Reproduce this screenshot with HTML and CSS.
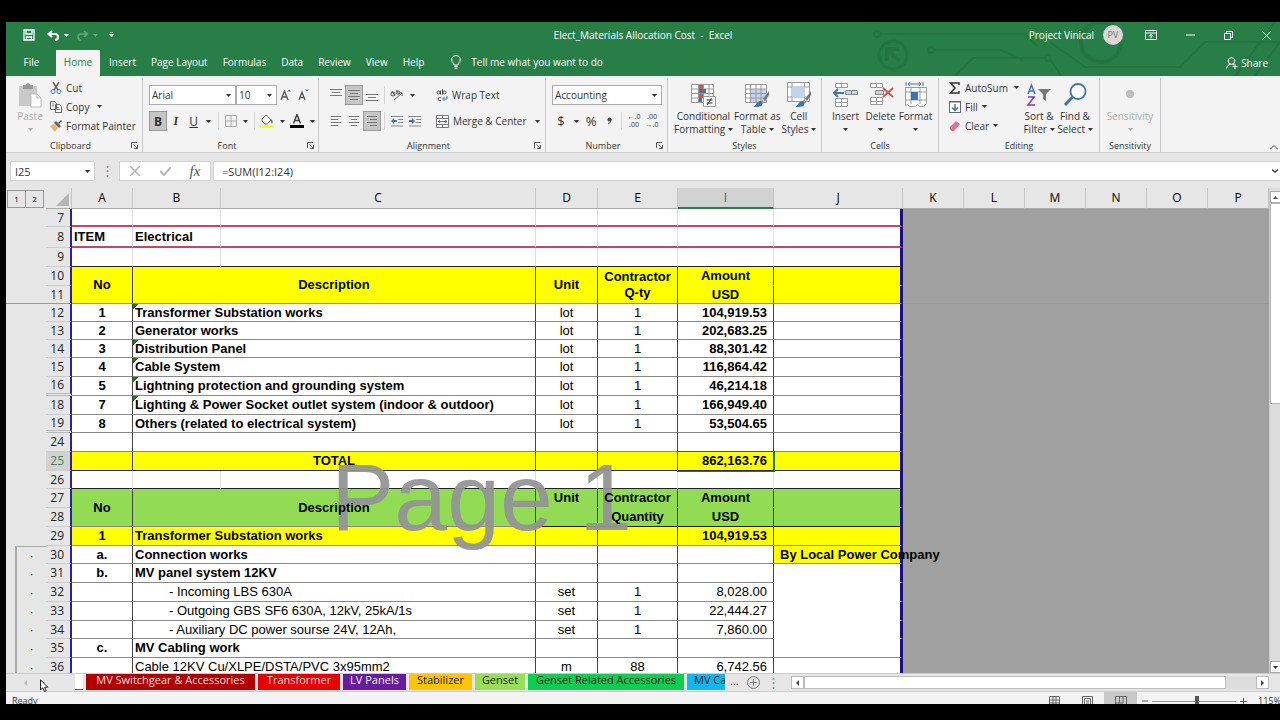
FILE: index.html
```html
<!DOCTYPE html>
<html lang="en">
<head>
<meta charset="utf-8">
<title>Elect_Materials Allocation Cost - Excel</title>
<link rel="stylesheet" href="styles.css">
</head>
<body>
<svg class="defs" aria-hidden="true">
  <symbol id="dn" viewBox="0 0 5 3"><path d="M0 0h5L2.500 3z" fill="currentColor"/></symbol>
  <symbol id="launch" viewBox="0 0 7 7"><path d="M.5 6V.5H6M2.500 2.500l3.500 3.500M6.500 3v3.500H3" fill="none" stroke="#555"/></symbol>
  <symbol id="brush" viewBox="0 0 18 18"><path d="M17 1l-6 8 2 2 4-6z" fill="#777"/><path d="M10 10l2 2-1 2-3-2z" fill="#999"/><path d="M8 11c2 0 3 2 2 4-1 2-6 2-9 2 3-1 3-5 7-6z" fill="#3d74b5"/></symbol>
</svg>
<div class="window">
  <header class="top">
    <svg class="circuit" viewBox="0 0 410 54" width="410" height="54" fill="none" stroke="#206c3b" stroke-width="2" aria-hidden="true">
      <circle cx="23" cy="33" r="14" stroke-width="3"/><path d="M17 39V27h12M18 28l11 11" stroke-width="4"/>
      <circle cx="7" cy="12" r="3"/><path d="M10 12h145l12 12M65 28h66l22 10"/><circle cx="61" cy="28" r="3"/>
      <path d="M85 54l18-18h72"/><circle cx="178" cy="36" r="3"/><path d="M181 38l10 16M180 20l35 25h95l25-25h75M365 54l40-54M385 54l25-34"/>
      <circle cx="231" cy="20" r="20" stroke-width="4"/>
    </svg>
    <div class="titlebar">
      <div class="quick">
        <button aria-label="Save"><svg width="12" height="12" viewBox="0 0 12 12"><path d="M1 1h10v10H1zM3 1v4h6V1M3.500 11V8h5v3" fill="none" stroke="#fff" stroke-width="1.300"/></svg></button>
        <button class="undo" aria-label="Undo"><svg width="13" height="11" viewBox="0 0 13 11"><path d="M5 1L1.500 4 5 7M2 4h6c4 0 4 6 0 6" fill="none" stroke="#fff" stroke-width="2"/></svg><svg width="5" height="3"><use href="#dn"/></svg></button>
        <button class="redo" aria-label="Redo"><svg width="13" height="11" viewBox="0 0 13 11"><path d="M8 1l3.500 3L8 7M11 4H5C1 4 1 10 5 10" fill="none" stroke="#fff" stroke-width="1.600"/></svg><svg width="5" height="3"><use href="#dn"/></svg></button>
        <button class="custom" aria-label="Customize toolbar"><svg width="5" height="6" viewBox="0 0 5 6"><path d="M1 .5h3M.5 2.500h4L2.500 5z" fill="#fff" stroke="#fff" stroke-width=".5"/></svg></button>
      </div>
      <h1>Elect_Materials Allocation Cost &nbsp;-&nbsp; Excel</h1>
      <div class="account">
        <span>Project Vinical</span><span class="avatar">PV</span>
        <button aria-label="Ribbon display"><svg width="12" height="10" viewBox="0 0 12 10"><path d="M.5 .5h11v9H.5zM.5 3h11M6 8.500V4.500M4 6.500l2-2 2 2" fill="none" stroke="#fff"/></svg></button>
        <button aria-label="Minimize"><svg width="9" height="2"><path d="M0 1h9" stroke="#fff"/></svg></button>
        <button aria-label="Restore"><svg width="9" height="9" viewBox="0 0 9 9"><path d="M.5 2.500h6v6h-6zM2.500 2.500v-2h6v6h-2" fill="none" stroke="#fff"/></svg></button>
        <button aria-label="Close"><svg width="9" height="9" viewBox="0 0 9 9"><path d="M.5 .5l8 8M8.500 .5l-8 8" stroke="#fff"/></svg></button>
      </div>
    </div>
    <nav class="tabs">
      <button class="file">File</button><button class="active">Home</button><button>Insert</button><button>Page Layout</button><button>Formulas</button><button>Data</button><button>Review</button><button>View</button><button>Help</button>
      <button class="tell"><svg width="10" height="14" viewBox="0 0 10 14"><path d="M3 10C3 8 .7 7.500 .7 4.800a4.300 4.300 0 018.600 0C9.300 7.500 7 8 7 10zM3 11.500h4M3.500 13.200h3" fill="none" stroke="#fff"/></svg>Tell me what you want to do</button>
      <button class="share"><svg width="12" height="12" viewBox="0 0 12 12"><circle cx="5.500" cy="4" r="3.300" fill="none" stroke="#fff"/><path d="M.5 11.500C1 9 2.500 7.500 4.500 7.300M6.500 7.300L8 8M6.500 9.500h5M9 7v5" fill="none" stroke="#fff"/></svg>Share</button>
    </nav>
  </header>

  <section class="ribbon" aria-label="Home ribbon">
    <div class="group clipboard">
      <div class="body">
        <button class="big off"><svg width="26" height="26" viewBox="0 0 26 26"><path d="M2 4h18v20H2z" fill="#c9c9c9"/><path d="M6 3h3a2 2 0 014 0h3v4H6z" fill="#999"/><path d="M14 12h6l4 4v9H14z" fill="#fff" stroke="#bbb"/><path d="M20 12v4h4" fill="none" stroke="#bbb"/></svg><span>Paste</span><svg width="5" height="3"><use href="#dn"/></svg></button>
        <div class="stack">
          <button><svg width="12" height="12" viewBox="0 0 12 12"><path d="M3 0l5 8M9 0L4 8" stroke="#666" stroke-width="1.500"/><circle cx="3" cy="9.500" r="2" fill="none" stroke="#3d74b5"/><circle cx="9" cy="9.500" r="2" fill="none" stroke="#3d74b5"/></svg>Cut</button>
          <button><svg width="12" height="12" viewBox="0 0 12 12"><path d="M.5 .5h4l2 2v6h-6zM5.500 3.500h4l2 2v6h-6z" fill="#fff" stroke="#666"/><path d="M2 3h2M2 5h2M7 6.500h2M7 8.500h3" stroke="#777"/></svg>Copy<svg class="far" width="5" height="3"><use href="#dn"/></svg></button>
          <button><svg width="12" height="12" viewBox="0 0 12 12"><path d="M0 6l4-2 4 4-3 4z" fill="#e2b66c"/><path d="M4 3l2-2 5 5-2 2z" fill="#666"/><path d="M8 3l3-3 1 1-3 3z" fill="#444"/></svg>Format Painter</button>
        </div>
      </div>
      <footer><span>Clipboard</span><svg width="7" height="7"><use href="#launch"/></svg></footer>
    </div>

    <div class="group font">
      <div class="body rows">
        <div class="line">
          <label class="combo name"><select aria-label="Font"><option>Arial</option></select><svg width="5" height="3"><use href="#dn"/></svg></label><label class="combo size"><select aria-label="Font size"><option>10</option></select><svg width="5" height="3"><use href="#dn"/></svg></label>
          <button class="t" aria-label="Increase font"><svg width="12" height="12" viewBox="0 0 12 12"><path d="M1 11l3.500-9L8 11M2.500 8h4" fill="none" stroke="#555" stroke-width="1.300"/><path d="M7 2.500L9 .5l2 2z" fill="#3d74b5"/></svg></button>
          <button class="t" aria-label="Decrease font"><svg width="12" height="12" viewBox="0 0 12 12"><path d="M1 11l3-8 3 8M2.500 8.500h3" fill="none" stroke="#555" stroke-width="1.300"/><path d="M7 .5h4l-2 2z" fill="#3d74b5"/></svg></button>
        </div>
        <div class="line">
          <button class="t on"><b>B</b></button><button class="t"><i>I</i></button><button class="t"><u>U</u></button><button class="dd" aria-label="Underline options"><svg width="5" height="3"><use href="#dn"/></svg></button><span class="sep"></span>
          <button class="t" aria-label="Borders"><svg width="12" height="12" viewBox="0 0 12 12"><path d="M.5 .5h11v11H.5zM6 0v12M0 6h12" fill="none" stroke="#aaa"/></svg></button><button class="dd" aria-label="Border options"><svg width="5" height="3"><use href="#dn"/></svg></button><span class="sep"></span>
          <button class="t" aria-label="Fill color"><svg width="14" height="14" viewBox="0 0 14 14"><path d="M2 5l4-4 5 5-4 4H5L2 7z" fill="#fff" stroke="#666"/><path d="M11 5c2 1 2 4 1 5-1-1-1-3-1-5z" fill="#3d74b5"/><path d="M0 11h13v3H0z" fill="#ff0"/></svg></button><button class="dd" aria-label="Fill options"><svg width="5" height="3"><use href="#dn"/></svg></button>
          <button class="t" aria-label="Font color"><svg width="14" height="14" viewBox="0 0 14 14"><path d="M3.500 9.500l3.500-9 3.500 9M5 6.500h4" fill="none" stroke="#444" stroke-width="1.500"/><path d="M0 11h14v3H0z"/></svg></button><button class="dd" aria-label="Font color options"><svg width="5" height="3"><use href="#dn"/></svg></button>
        </div>
      </div>
      <footer><span>Font</span><svg width="7" height="7"><use href="#launch"/></svg></footer>
    </div>

    <div class="group align">
      <div class="body">
        <div class="rows left">
          <div class="line">
            <button class="t" aria-label="Top align"><svg width="12" height="12"><path d="M0 .5h12M2 3.500h8M0 6.500h12" stroke="#777"/></svg></button><button class="t on" aria-label="Middle align"><svg width="12" height="12"><path d="M0 1.500h12M2 4.500h8M0 7.500h12M2 10.500h8" stroke="#777"/></svg></button><button class="t" aria-label="Bottom align"><svg width="12" height="12"><path d="M0 5.500h12M2 8.500h8M0 11.500h12" stroke="#777"/></svg></button><span class="sep"></span>
            <button class="t" aria-label="Orientation"><svg width="14" height="12" viewBox="0 0 14 12"><path d="M4 11L12 4M9 4h3v3" fill="none" stroke="#555"/><circle cx="3" cy="5" r="2" fill="none" stroke="#555"/><path d="M5 7L2 2M6 1l3 4" stroke="#555"/><circle cx="8" cy="3.500" r="1.700" fill="none" stroke="#555"/></svg></button><button class="dd" aria-label="Orientation options"><svg width="5" height="3"><use href="#dn"/></svg></button>
          </div>
          <div class="line">
            <button class="t" aria-label="Align left"><svg width="10" height="10"><path d="M0 .5h10M0 3.500h7M0 6.500h10M0 9.500h7" stroke="#777"/></svg></button><button class="t" aria-label="Center"><svg width="10" height="10"><path d="M0 .5h10M2 3.500h6M0 6.500h10M2 9.500h6" stroke="#777"/></svg></button><button class="t on" aria-label="Align right"><svg width="10" height="10"><path d="M0 .5h10M3 3.500h7M0 6.500h10M3 9.500h7" stroke="#777"/></svg></button><span class="sep"></span>
            <button class="t" aria-label="Decrease indent"><svg width="12" height="11"><path d="M0 .5h12M7 3.500h5M7 6.500h5M0 10h12" stroke="#888"/><path d="M0 5l3-3v2h3v2H3v2z" fill="#3d74b5"/></svg></button><button class="t" aria-label="Increase indent"><svg width="12" height="11"><path d="M0 .5h12M7 3.500h5M7 6.500h5M0 10h12" stroke="#888"/><path d="M6 5L3 2v2H0v2h3v2z" fill="#3d74b5"/></svg></button>
          </div>
        </div>
        <div class="rows right">
          <button class="line wrap"><svg width="12" height="12" viewBox="0 0 12 12"><circle cx="2.500" cy="3.500" r="1.500" fill="none" stroke="#444"/><path d="M4.500 1.500v4M6.500 0v5.500M5 8.500H3.500a1.500 1.500 0 000 3H5" fill="none" stroke="#444"/><circle cx="8.500" cy="3.500" r="1.500" fill="none" stroke="#444"/><path d="M11 7v3H7M8.500 8l-2 2 2 2" fill="none" stroke="#3d74b5"/></svg>Wrap Text</button>
          <button class="line"><svg width="13" height="13" viewBox="0 0 13 13"><path d="M.5 .5h12v12H.5zM.5 3.500h12M.5 9.500h12M6.500 0v3M6.500 10v3" fill="#fff" stroke="#777"/><path d="M2 6.500h9M4 5L2 6.500 4 8M9 5l2 1.500L9 8" fill="none" stroke="#3d74b5"/></svg>Merge &amp; Center<svg class="far" width="5" height="3"><use href="#dn"/></svg></button>
        </div>
      </div>
      <footer><span>Alignment</span><svg width="7" height="7"><use href="#launch"/></svg></footer>
    </div>

    <div class="group number">
      <div class="body rows">
        <div class="line"><label class="combo fmt"><select aria-label="Number format"><option>Accounting</option></select><svg width="5" height="3"><use href="#dn"/></svg></label></div>
        <div class="line">
          <button class="t sym">$</button><button class="dd" aria-label="Currency options"><svg width="5" height="3"><use href="#dn"/></svg></button><button class="t sym">%</button><button class="t sym" aria-label="Comma style"><svg width="5" height="8"><circle cx="2.500" cy="2.500" r="2" fill="#444"/><path d="M4 2c0 3-1 4-3 5" fill="none" stroke="#444"/></svg></button><span class="sep"></span>
          <button class="t dec"><span>←.0</span><span>.00</span></button><button class="t dec"><span>.00</span><span>→.0</span></button>
        </div>
      </div>
      <footer><span>Number</span><svg width="7" height="7"><use href="#launch"/></svg></footer>
    </div>

    <div class="group styles">
      <div class="body">
        <button class="big"><svg width="26" height="26" viewBox="0 0 26 26"><path d="M1.500 2.500h22v18h-22zM1.500 7h22M1.500 11.500h22M1.500 16h22M8.500 2v18M13.500 2v18M19 2v18" fill="#fff" stroke="#999"/><path d="M9 3h4v4H9zM9 12h4v4H9z" fill="#d5533f"/><path d="M9 7h7v4H9zM9 16h3v4H9z" fill="#3d74b5"/><path d="M13.500 14.500h12v10h-12z" fill="#fff" stroke="#999"/><path d="M16.500 18h6M16.500 21h6M21.500 16l-4 7" stroke="#333"/></svg><span>Conditional<br>Formatting <svg width="5" height="3"><use href="#dn"/></svg></span></button>
        <button class="big"><svg width="26" height="26" viewBox="0 0 26 26"><path d="M1.500 2.500h21v18h-21z" fill="#fff"/><path d="M7 7h15v13H7z" fill="#c3d3ea"/><path d="M1.500 2.500h21v18h-21zM1.500 7h21M1.500 11.500h21M1.500 16h21M6.500 2v18M12 2v18M17 2v18" fill="none" stroke="#999"/><use href="#brush" x="8" y="8" width="18" height="18"/></svg><span>Format as<br>Table <svg width="5" height="3"><use href="#dn"/></svg></span></button>
        <button class="big"><svg width="26" height="26" viewBox="0 0 26 26"><path d="M1.500 .5h22v19h-22zM1.500 5h22M1.500 15h22M6 0v19M18.500 0v19" fill="#fff" stroke="#999"/><path d="M6 5h13v10H6z" fill="#c3d3ea"/><use href="#brush" x="8" y="8" width="18" height="18"/></svg><span>Cell<br>Styles <svg width="5" height="3"><use href="#dn"/></svg></span></button>
      </div>
      <footer><span>Styles</span></footer>
    </div>

    <div class="group cells">
      <div class="body">
        <button class="big"><svg width="26" height="26" viewBox="0 0 26 26"><path d="M2.500 1.500h12v4h-12zM8.500 1v5M2.500 16.500h12v8h-12zM8.500 16v8M2.500 20.500h12" fill="#fff" stroke="#999"/><path d="M12.500 8.500h12v4h-12zM18.500 8v5" fill="#c3d3ea" stroke="#888"/><path d="M11 11H1M5 7l-4 4 4 4" fill="none" stroke="#3d74b5" stroke-width="2"/></svg><span>Insert</span><svg width="5" height="3"><use href="#dn"/></svg></button>
        <button class="big"><svg width="26" height="26" viewBox="0 0 26 26"><path d="M2.500 1.500h12v4h-12zM8.500 1v5M2.500 15.500h12v7h-12zM8.500 16v7M2.500 19.500h12" fill="#fff" stroke="#999"/><path d="M7.500 8.500h8v4h-8z" fill="#c3d3ea" stroke="#888"/><path d="M15 6l10 9M25 6L15 15" stroke="#d5533f" stroke-width="2"/></svg><span>Delete</span><svg width="5" height="3"><use href="#dn"/></svg></button>
        <button class="big"><svg width="26" height="26" viewBox="0 0 26 26"><path d="M3 0v4M20 0v4M5 2h13M7 0L5 2l2 2M16 0l2 2-2 2" fill="none" stroke="#3d74b5"/><path d="M2.500 5.500h21v16l-3 3h-4l-2-2-2 2h-6l-2-2-2 1zM2.500 10h21M2.500 18h21M8 6v16M17 6v16" fill="#fff" stroke="#999"/><path d="M8 10h7v8H8z" fill="#3d74b5"/></svg><span>Format</span><svg width="5" height="3"><use href="#dn"/></svg></button>
      </div>
      <footer><span>Cells</span></footer>
    </div>

    <div class="group editing">
      <div class="body">
        <div class="stack">
          <button><svg width="12" height="12" viewBox="0 0 12 12"><path d="M10 3V1H1.500L6 6l-4.500 5H10V9" fill="none" stroke="#333" stroke-width="1.500"/></svg>AutoSum<svg class="far" width="5" height="3"><use href="#dn"/></svg></button>
          <button><svg width="12" height="12" viewBox="0 0 12 12"><path d="M.5 .5h11v11H.5z" fill="#fff" stroke="#666"/><path d="M0 .5h12" stroke="#666" stroke-width="2"/><path d="M6 3v6M3 6.500l3 3 3-3" fill="none" stroke="#3d74b5" stroke-width="1.500"/></svg>Fill <svg width="5" height="3"><use href="#dn"/></svg></button>
          <button><svg width="12" height="12" viewBox="0 0 12 12"><path d="M1 7l6-6 4 3-6 7H3L1 9z" fill="#e0719c"/><path d="M1 7l4 4-2 0-2-2z" fill="#b77"/></svg>Clear <svg width="5" height="3"><use href="#dn"/></svg></button>
        </div>
        <button class="big"><svg width="26" height="26" viewBox="0 0 26 26"><path d="M2 12L5.500 3 9 12M3.500 9h4" fill="none" stroke="#3d74b5" stroke-width="1.500"/><path d="M2 15h6l-6 8h7" fill="none" stroke="#7a3fb0" stroke-width="1.500"/><path d="M12 7h13l-5 5v7l-3-2v-5z" fill="#777"/></svg><span>Sort &amp;<br>Filter <svg width="5" height="3"><use href="#dn"/></svg></span></button>
        <button class="big"><svg width="26" height="26" viewBox="0 0 26 26"><circle cx="16" cy="9.500" r="7.500" fill="#fff" stroke="#3d74b5" stroke-width="1.800"/><path d="M10.500 15L3 23" stroke="#3d74b5" stroke-width="3"/></svg><span>Find &amp;<br>Select <svg width="5" height="3"><use href="#dn"/></svg></span></button>
      </div>
      <footer><span>Editing</span></footer>
    </div>

    <div class="group sens">
      <div class="body"><button class="big off"><svg width="26" height="26"><circle cx="13" cy="12" r="4" fill="#bdbdbd"/></svg><span>Sensitivity</span><svg width="5" height="3"><use href="#dn"/></svg></button></div>
      <footer><span>Sensitivity</span></footer>
    </div>
    <button class="collapse" aria-label="Collapse ribbon"><svg width="8" height="5"><path d="M0 4.500l4-4 4 4" fill="none" stroke="#444"/></svg></button>
  </section>

  <div class="formula">
    <label class="combo cell"><input type="text" value="I25" aria-label="Name box"><svg width="5" height="3"><use href="#dn"/></svg></label>
    <span class="dots">⋮</span>
    <div class="fx">
      <button aria-label="Cancel"><svg width="10" height="10"><path d="M0 0l10 10M10 0L0 10" stroke="#b5b5b5" stroke-width="1.500"/></svg></button>
      <button aria-label="Enter"><svg width="11" height="9"><path d="M0 4l4 4 7-8" fill="none" stroke="#b5b5b5" stroke-width="2"/></svg></button>
      <button class="fn"><i>fx</i></button>
    </div>
    <label class="bar"><input type="text" value="=SUM(I12:I24)" aria-label="Formula"><svg width="6" height="4" viewBox="0 0 6 4"><path d="M0 .5l3 2.500 3-2.500" fill="none" stroke="#444" stroke-width="1.500"/></svg></label>
  </div>

  <main class="sheet">
    <div class="grid">
      <table>
        <colgroup><col class="w-o1"><col class="w-o2"><col class="w-rh"><col class="w-a"><col class="w-b"><col class="w-c"><col class="w-d"><col class="w-e"><col class="w-i"><col class="w-j"><col><col><col><col><col><col></colgroup>
        <thead><tr><td colspan="2" class="levels"><div><button>1</button><button>2</button></div></td><th class="corner"><svg width="13" height="13"><path d="M13 0v13H0z" fill="#b5b5b5"/></svg></th><th>A</th><th>B</th><th>C</th><th>D</th><th>E</th><th class="sel">I</th><th>J</th><th>K</th><th>L</th><th>M</th><th>N</th><th>O</th><th>P</th></tr></thead>
        <tbody>
          <tr class="short plain redline"><td colspan="2"></td><th>7</th><td></td><td></td><td></td><td></td><td></td><td></td><td></td><td colspan="6"></td></tr>
          <tr class="tall plain redline"><td colspan="2"></td><th>8</th><td class="l b">ITEM</td><td class="l b">Electrical</td><td></td><td></td><td></td><td></td><td></td><td colspan="6"></td></tr>
          <tr class="plain end"><td colspan="2"></td><th>9</th><td></td><td></td><td></td><td></td><td></td><td></td><td></td><td colspan="6"></td></tr>
          <tr class="yellow b open"><td colspan="2"></td><th>10</th><td rowspan="2" class="close">No</td><td colspan="2" rowspan="2" class="close">Description</td><td rowspan="2" class="close">Unit</td><td rowspan="2" class="close">Contractor<br>Q-ty</td><td>Amount</td><td></td><td colspan="6"></td></tr>
          <tr class="short yellow b freeze"><td colspan="2"></td><th>11</th><td class="inner">USD</td><td></td><td colspan="6"></td></tr>
          <tr class="short"><td colspan="2"></td><th>12</th><td class="b">1</td><td colspan="2" class="l b err">Transformer Substation works</td><td>lot</td><td>1</td><td class="r b">104,919.53</td><td></td><td colspan="6"></td></tr>
          <tr class="short"><td colspan="2"></td><th>13</th><td class="b">2</td><td colspan="2" class="l b">Generator works</td><td>lot</td><td>1</td><td class="r b">202,683.25</td><td></td><td colspan="6"></td></tr>
          <tr class="short"><td colspan="2"></td><th>14</th><td class="b">3</td><td colspan="2" class="l b err">Distribution Panel</td><td>lot</td><td>1</td><td class="r b">88,301.42</td><td></td><td colspan="6"></td></tr>
          <tr><td colspan="2"></td><th>15</th><td class="b">4</td><td colspan="2" class="l b err">Cable System</td><td>lot</td><td>1</td><td class="r b">116,864.42</td><td></td><td colspan="6"></td></tr>
          <tr><td colspan="2"></td><th class="skip">16</th><td class="b">5</td><td colspan="2" class="l b err">Lightning protection and grounding system</td><td>lot</td><td>1</td><td class="r b">46,214.18</td><td></td><td colspan="6"></td></tr>
          <tr><td colspan="2"></td><th>18</th><td class="b">7</td><td colspan="2" class="l b err">Lighting &amp; Power Socket outlet system (indoor &amp; outdoor)</td><td>lot</td><td>1</td><td class="r b">166,949.40</td><td></td><td colspan="6"></td></tr>
          <tr class="short"><td colspan="2"></td><th class="skip">19</th><td class="b">8</td><td colspan="2" class="l b">Others (related to electrical system)</td><td>lot</td><td>1</td><td class="r b">53,504.65</td><td></td><td colspan="6"></td></tr>
          <tr><td colspan="2"></td><th>24</th><td></td><td colspan="2"></td><td></td><td></td><td></td><td></td><td colspan="6"></td></tr>
          <tr class="yellow b end"><td colspan="2"></td><th class="cur">25</th><td></td><td colspan="2"><span>TOTAL</span></td><td></td><td></td><td class="r picked">862,163.76</td><td></td><td colspan="6"></td></tr>
          <tr class="short plain end"><td colspan="2"></td><th>26</th><td></td><td></td><td></td><td></td><td></td><td></td><td></td><td colspan="6"></td></tr>
          <tr class="green b open"><td colspan="2"></td><th>27</th><td rowspan="2" class="close">No</td><td colspan="2" rowspan="2" class="close"><span>Description</span></td><td><span>Unit</span></td><td><span>Contractor</span></td><td>Amount</td><td></td><td colspan="6"></td></tr>
          <tr class="green b end"><td colspan="2"></td><th>28</th><td class="inner"></td><td><span>Quantity</span></td><td>USD</td><td></td><td colspan="6"></td></tr>
          <tr class="yellow b"><td colspan="2"></td><th>29</th><td>1</td><td colspan="2" class="l"><span>Transformer Substation works</span></td><td></td><td></td><td class="r">104,919.53</td><td></td><td colspan="6"></td></tr>
          <tr class="short sub first"><td></td><td>·</td><th>30</th><td class="b">a.</td><td colspan="2" class="l b">Connection works</td><td></td><td></td><td></td><td class="l b note"><span>By Local Power Company</span></td><td colspan="6"></td></tr>
          <tr class="sub"><td></td><td>·</td><th>31</th><td class="b">b.</td><td colspan="2" class="l b">MV panel system 12KV</td><td></td><td></td><td></td><td class="void"></td><td colspan="6"></td></tr>
          <tr class="sub"><td></td><td>·</td><th>32</th><td></td><td colspan="2" class="l in">- Incoming LBS 630A</td><td>set</td><td>1</td><td class="r">8,028.00</td><td class="void"></td><td colspan="6"></td></tr>
          <tr class="sub"><td></td><td>·</td><th>33</th><td></td><td colspan="2" class="l in">- Outgoing GBS SF6 630A, 12kV, 25kA/1s</td><td>set</td><td>1</td><td class="r">22,444.27</td><td class="void"></td><td colspan="6"></td></tr>
          <tr class="short sub"><td></td><td>·</td><th>34</th><td></td><td colspan="2" class="l in">- Auxiliary DC power sourse 24V, 12Ah,</td><td>set</td><td>1</td><td class="r">7,860.00</td><td class="void"></td><td colspan="6"></td></tr>
          <tr class="sub"><td></td><td>·</td><th>35</th><td class="b">c.</td><td colspan="2" class="l b">MV Cabling work</td><td></td><td></td><td></td><td></td><td colspan="6"></td></tr>
          <tr class="sub"><td></td><td>·</td><th>36</th><td></td><td colspan="2" class="l">Cable 12KV Cu/XLPE/DSTA/PVC 3x95mm2</td><td>m</td><td>88</td><td class="r">6,742.56</td><td></td><td colspan="6"></td></tr>
        </tbody>
      </table>
      <div class="watermark">Page 1</div>
    </div>
    <div class="vscroll"><button aria-label="Scroll up"><svg width="5" height="3" viewBox="0 0 5 3"><path d="M0 3h5L2.500 0z" fill="#555"/></svg></button><div class="thumb"></div><div class="track"></div><button aria-label="Scroll down"><svg width="5" height="3"><use href="#dn"/></svg></button></div>
  </main>

  <div class="sheets">
    <div class="nav"><button aria-label="Previous sheet"><svg width="3" height="6"><path d="M3 0v6L0 3z" fill="#bbb"/></svg></button><button aria-label="Next sheet"><svg width="4" height="6"><path d="M0 0v6l4-3z" fill="#555"/></svg></button>
      <svg class="pointer" width="9" height="13" viewBox="0 0 9 13"><path d="M.5 .8v10l2.300-2 1.700 3.700 1.700-.8-1.600-3.500h3.200z" fill="#fff" stroke="#222"/></svg></div>
    <button class="tab now" aria-label="Summary"></button><button class="tab t1">MV Switchgear &amp; Accessories</button><button class="tab t2">Transformer</button><button class="tab t3">LV Panels</button><button class="tab t4">Stabilizer</button><button class="tab t5">Genset</button><button class="tab t6">Genset Related Accessories</button><button class="tab t7">MV Ca</button>
    <span class="more">...</span><button class="add" aria-label="New sheet"><svg width="13" height="13" viewBox="0 0 13 13"><circle cx="6.500" cy="6.500" r="6" fill="none" stroke="#777"/><path d="M6.500 3v7M3 6.500h7" stroke="#777"/></svg></button><span class="dots">⋮</span>
    <div class="hscroll"><button aria-label="Scroll left"><svg width="3" height="6"><path d="M3 0v6L0 3z" fill="#444"/></svg></button><div class="thumb"></div><div class="track"></div><button aria-label="Scroll right"><svg width="3" height="6"><path d="M0 0v6l3-3z" fill="#444"/></svg></button></div>
  </div>

  <footer class="status">
    <span class="ready">Ready</span>
    <button aria-label="Normal view"><svg width="11" height="11"><path d="M.5 .5h10v10H.5zM4 0v11M7 0v11M0 4h11M0 7h11" fill="none" stroke="#666"/></svg></button>
    <button aria-label="Page layout view"><svg width="11" height="11"><path d="M.5 .5h10v10H.5zM2.500 2.500h6v8M2.500 2.500v8M4 5h3M4 7h3" fill="none" stroke="#666"/></svg></button>
    <button class="on" aria-label="Page break view"><svg width="12" height="11"><path d="M.5 .5h11v10H.5zM4.500 0v7M8 0v7M0 7h8" fill="none" stroke="#666"/></svg></button>
    <div class="zoom"><svg width="6" height="2"><path d="M0 1h6" stroke="#555"/></svg><input type="range" min="10" max="220" value="122" aria-label="Zoom"><svg width="7" height="7"><path d="M0 3.500h7M3.500 0v7" stroke="#555"/></svg></div>
    <span class="pct">115%</span>
  </footer>
</div>
</body>
</html>
```
FILE: styles.css
```css
* { box-sizing: border-box; }
body { margin: 0; background: #000; font-family: "Open Sans", "Noto Sans", sans-serif; font-size: 10px; color: #333; }
button, input, select { font: inherit; color: inherit; border: 0; background: none; padding: 0; margin: 0; }
button { display: flex; align-items: center; justify-content: center; white-space: nowrap; }
svg { flex: none; }
.defs { display: none; }
.window { display: flex; flex-direction: column; height: 100vh; padding: 22px 0 16px 6px; }

/* title bar and tabs */
.top { position: relative; background: #277e47; color: #fff; flex: none; overflow: hidden; }
.circuit { position: absolute; right: 0; top: 0; opacity: .5; }
.titlebar { position: relative; display: grid; grid-template-columns: 1fr auto 1fr; align-items: center; height: 26px; }
.titlebar h1 { margin: 0; font-size: 10px; font-weight: 400; }
.quick { display: flex; align-items: center; padding-left: 17px; }
.quick .undo, .quick .redo { gap: 4px; }
.quick .undo { margin-left: 12px; }
.quick .redo { margin-left: 7px; opacity: .3; }
.quick .custom { margin-left: 11px; }
.account { display: flex; align-items: center; justify-content: flex-end; padding-right: 9px; }
.avatar { width: 20px; height: 20px; line-height: 20px; margin: 0 22px 0 9px; border-radius: 50%; background: #dcd8d8; color: #776; text-align: center; font-size: 9px; }
.account button + button { margin-left: 29px; }
.tabs { position: relative; display: flex; height: 28px; padding: 2px 12px 0 0; }
.tabs button { padding: 0 7px 2px 8px; }
.tabs .file { width: 50px; }
.tabs .active { background: #f4f3f3; color: #277e47; width: 44px; padding: 0 0 2px; margin-right: 1px; }
.tabs .tell { gap: 10px; margin-left: 12px; }
.tabs .share { margin-left: auto; gap: 3px; padding: 0; }

/* ribbon */
.ribbon { display: flex; flex: none; background: #f4f3f3; border-bottom: 1px solid #d0d0d0; padding: 2px 0 0; }
.group { display: flex; flex-direction: column; border-right: 1px solid #c8c8c8; flex: none; }
.body { display: flex; height: 60px; }
.group footer { display: flex; height: 14px; align-items: center; padding: 0 4px; font-size: 9px; }
.group footer span { flex: 1; text-align: center; }
.big { flex-direction: column; justify-content: flex-start; padding-top: 4px; line-height: 13px; }
.big > svg + span { margin-top: 2px; }
.big > svg:last-child { margin-top: 5px; }
.big span svg { vertical-align: 2px; }
.off { color: #aaa; }
.stack { display: grid; grid-template-rows: repeat(3, 19px); }
.stack button { justify-content: flex-start; gap: 4px; }
.rows { display: flex; flex-direction: column; gap: 6px; padding-top: 7px; }
.line { display: flex; height: 20px; align-items: center; }
.line .t { width: 18px; height: 20px; }
.t.on { background: #c6c6c6; border: 1px solid #999; }
.dd { width: 12px; height: 20px; }
.sep { width: 1px; height: 18px; margin: 0 3px; background: #d5d5d5; }
.combo { display: grid; align-items: center; background: #fff; border: 1px solid #ababab; height: 20px; }
.combo > * { grid-area: 1 / 1; }
.combo select, .combo input { appearance: none; width: 100%; height: 18px; padding: 0 2px; background: none; outline: 0; }
.combo svg { justify-self: end; margin-right: 4px; pointer-events: none; }
.clipboard { width: 137px; }
.clipboard .big { width: 44px; padding-left: 4px; }
.clipboard .far { margin-left: 4px; }
.font { width: 176px; }
.font .rows { padding-left: 6px; }
.font .name { width: 87px; }
.font .size { width: 41px; }
.font b, .font i, .font u { font-size: 12px; }
.font i { font-family: "Liberation Serif", serif; font-weight: 700; }
.align { width: 227px; }
.align .left { width: 111px; padding-left: 8px; }
.align .right { padding-left: 6px; }
.align .right .line { gap: 4px; }
.align .right .wrap { justify-content: flex-start; }
.align .far { margin-left: 4px; }
.number { width: 122px; }
.number .rows { padding-left: 6px; }
.number .fmt { width: 110px; }
.sym { font-size: 13px; }
.line .dec { flex-direction: column; font-size: 7px; line-height: 8px; }
.styles { width: 154px; }
.styles .body { padding-left: 6px; gap: 1px; }
.cells { width: 117px; }
.cells .body { padding-left: 6px; }
.cells .big { width: 35px; }
.editing { width: 161px; }
.editing .body { padding-left: 10px; }
.editing .stack { width: 72px; }
.editing .far { margin-left: 2px; }
.editing .big { width: 36px; }
.sens { width: 61px; }
.sens .big { flex: 1; }
.collapse { margin: auto 2px 2px auto; }

/* formula bar */
.formula { display: flex; flex: none; background: #e6e6e6; padding: 8px 0 7px 4px; }
.formula .combo { width: 85px; border-color: #d0d0d0; }
.formula input { font-size: 11px; }
.formula .combo input { padding-left: 4px; }
.dots { color: #888; font-size: 13px; line-height: 18px; width: 24px; text-align: center; }
.fx { display: flex; background: #fff; border: 1px solid #d0d0d0; width: 92px; margin-right: 2px; }
.fx button { flex: 1; }
.fn i { font-family: "Liberation Serif", serif; font-size: 15px; line-height: 16px; color: #555; }
.bar { display: flex; flex: 1; align-items: center; background: #fff; border: 1px solid #d0d0d0; border-right: 0; padding: 0 2px 0 8px; }
.bar input { flex: 1; min-width: 0; outline: 0; }

/* sheet */
.sheet { display: flex; flex: 1; min-height: 0; background: #e6e6e6; }
.grid { position: relative; flex: 1; overflow: hidden; border-right: 1px solid #ccc; }
table { width: 100%; table-layout: fixed; border-collapse: separate; border-spacing: 0; font: 13px/16px "Liberation Sans", Arial, sans-serif; color: #000; }
.w-o1 { width: 9px; }
.w-o2 { width: 31px; }
.w-rh { width: 26px; }
.w-a { width: 61px; }
.w-b { width: 88px; }
.w-c { width: 315px; }
.w-d { width: 62px; }
.w-e { width: 80px; }
.w-i { width: 96px; }
.w-j { width: 129px; }
th, td { padding: 0; white-space: nowrap; text-align: center; }
th { font: 12px/16px "Open Sans", sans-serif; }
thead th { height: 21px; border-right: 1px solid #c4c4c4; border-bottom: 1px solid #aaa; }
thead .corner { vertical-align: bottom; text-align: right; line-height: 0; padding: 0 2px 2px 0; }
thead .sel { background: #d2d2d2; color: #217346; border-bottom: 2px solid #277e47; }
.levels > div { display: flex; padding-left: 1px; }
.levels button { width: 19px; height: 18px; border: 1px solid #999; font-size: 8px; font-family: "Open Sans", sans-serif; }
.levels button + button { margin-left: -1px; }
tbody tr { height: 19px; }
tbody .short { height: 18px; }
tbody .tall { height: 21px; }
tbody th { background: #e6e6e6; border-bottom: 1px solid #ccc; border-right: 2px solid #2c1fa0; color: #222; text-align: right; padding-right: 6px; }
tbody th.skip { border-bottom: 3px double #bbb; line-height: 14px; }
tbody th.cur { background: #d2d2d2; color: #4b7a5c; }
tbody td { background: #fff; border-right: 1px solid #444; border-bottom: 1px solid #888; }
tbody td:first-child, .sub td:nth-child(2) { background: #e6e6e6; border: 0; }
.sub td:nth-child(2) { border-left: 2px solid #aaa; }
.sub.first td:nth-child(2) { border-top: 1px solid #aaa; }
tbody tr td:last-child { background: #a0a0a0; border: 0; }
tbody tr td:nth-last-child(2) { border-right: 3px solid #1b0f80; }
.plain td { border-right-color: #ddd; }
.redline td { border-bottom: 2px solid #bf4a62; }
.end td { border-bottom-color: #222; }
.yellow td { background: #ff0; }
.green td { background: #92dc55; }
.green.open td:not(.close) { border-bottom-color: #92dc55; }
.yellow.open td:not(.close) { border-bottom-color: #ff0; }
.freeze td:first-child, .freeze th, .freeze td:last-child { border-bottom: 1px solid #999; }
.b { font-weight: 700; }
tbody .l { text-align: left; padding-left: 2px; }
tbody .r { text-align: right; padding-right: 6px; }
tbody .in { padding-left: 36px; }
.err { background-image: linear-gradient(135deg, #107c10 4px, transparent 4px); }
tbody .picked { outline: 1px solid #217346; }
tbody .note { background: #ff0; padding-left: 6px; }
tbody .void { border-bottom-color: #fff; }
td span { position: relative; z-index: 2; }
.watermark { position: absolute; left: 325px; top: 253px; z-index: 1; font: 95px/112px "Liberation Sans", Arial, sans-serif; color: #949494; opacity: .94; pointer-events: none; }
.vscroll { display: flex; flex-direction: column; flex: none; width: 10px; padding-top: 3px; background: #dcdcdc; }
.vscroll button { height: 12px; background: #fff; border: 1px solid #aaa; border-right: 0; }
.vscroll .thumb { height: 201px; background: #fff; border: 1px solid #b5b5b5; border-right: 0; }
.vscroll .track { flex: 1; }

/* sheet tabs */
.sheets { display: flex; flex: none; height: 19px; background: #e6e6e6; border-top: 1px solid #ccc; border-bottom: 1px solid #ccc; font-size: 11px; }
.nav { position: relative; width: 69px; display: flex; padding-left: 18px; gap: 14px; }
.pointer { position: absolute; left: 34px; top: 5px; }
.tab { height: 16px; padding: 0 9px 4px; margin-right: 3px; color: #222; line-height: 12px; }
.now { width: 8px; padding: 0; background: #fff; border-bottom: 1px solid #277e47; }
.t1 { background: #b00000; color: #fdd; width: 169px; }
.t2 { background: #e60000; color: #fdd; width: 82px; }
.t3 { background: #661c9c; color: #eee; width: 63px; }
.t4 { background: #ffc40a; width: 63px; }
.t5 { background: #98de58; width: 50px; }
.t6 { background: #10cc52; width: 156px; }
.t7 { background: #14b6ec; width: 38px; overflow: hidden; justify-content: flex-start; padding-left: 7px; padding-right: 0; margin: 0; }
.more { padding: 0 8px 0 5px; line-height: 14px; }
.sheets .dots { width: 27px; line-height: 16px; }
.hscroll { display: flex; flex: 1; margin: 2px 11px 2px 4px; background: #dcdcdc; }
.hscroll button { width: 13px; background: #fff; border: 1px solid #bbb; }
.hscroll .thumb { flex: 427; background: #fff; border: 1px solid #bbb; }
.hscroll .track { flex: 31; }

/* status bar */
.status { display: flex; flex: none; height: 12px; overflow: hidden; background: #f3f3f3; align-items: flex-start; font-size: 9px; }
.ready { flex: 1; padding-left: 6px; line-height: 18px; }
.status button { width: 33px; height: 12px; padding-top: 4px; align-items: flex-start; }
.status .on { background: #c8c8c8; }
.zoom { display: flex; align-items: center; height: 18px; padding-left: 5px; gap: 4px; }
.zoom input { appearance: none; width: 84px; height: 14px; background: linear-gradient(#999, #999) center / 100% 1px no-repeat; }
.zoom input::-webkit-slider-thumb { appearance: none; width: 4px; height: 10px; background: #555; }
.pct { padding-left: 11px; line-height: 18px; width: 33px; }
```
